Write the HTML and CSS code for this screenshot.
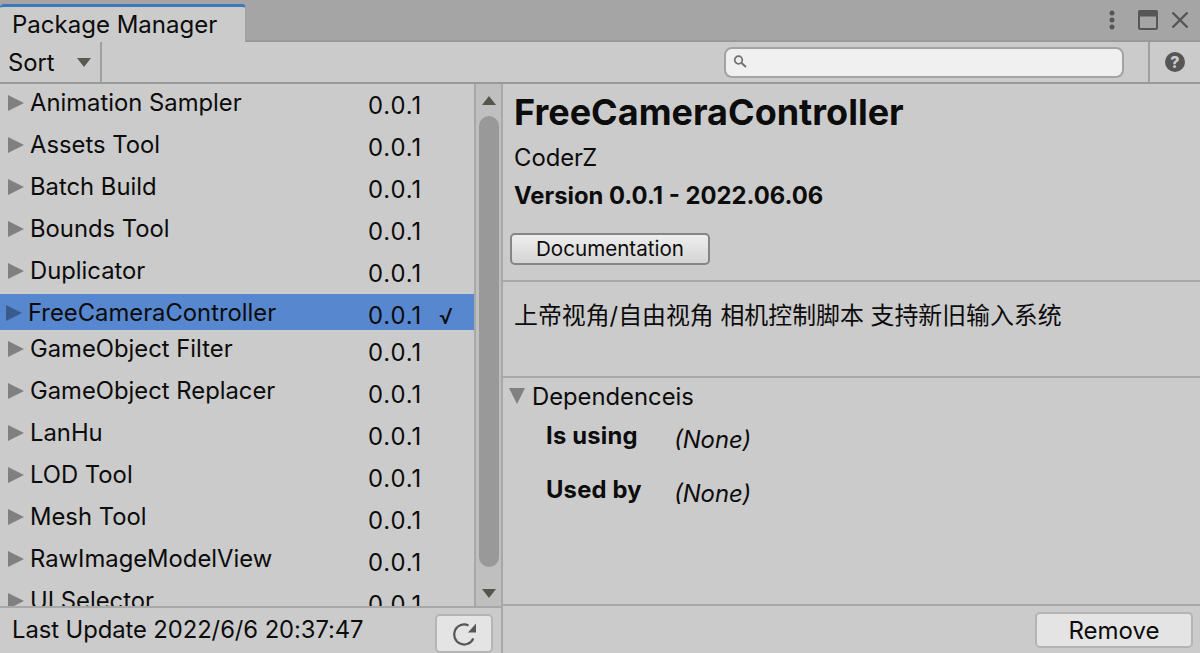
FILE: index.html
```html
<!DOCTYPE html>
<html lang="en">
<head>
<meta charset="utf-8">
<title>Package Manager</title>
<link rel="stylesheet" href="styles.css">
</head>
<body>
<div class="window">
  <header class="tabbar">
    <div class="tab">Package Manager</div>
    <div class="winbtns">
      <svg class="ico-dots" width="8" height="22" viewBox="0 0 8 22"><circle cx="4" cy="4" r="2.5"/><circle cx="4" cy="11" r="2.5"/><circle cx="4" cy="18" r="2.5"/></svg>
      <svg class="ico-max" width="20" height="20" viewBox="0 0 20 20"><rect x="1" y="1" width="18" height="18" rx="1.5" fill="none" stroke-width="2"/><rect x="1" y="1" width="18" height="5"/></svg>
      <svg class="ico-close" width="18" height="18" viewBox="0 0 18 18"><path d="M1.5 1.5l15 15M16.500 1.500l-15 15" fill="none" stroke-width="2.400"/></svg>
    </div>
  </header>
  <div class="toolbar">
    <div class="sort"><span>Sort</span><i class="tri tri-sort"></i></div>
    <div class="search">
      <svg width="16" height="16" viewBox="0 0 16 16"><circle cx="6.500" cy="6" r="3.800" fill="none" stroke-width="1.700"/><path d="M9.500 9l4.500 4" fill="none" stroke-width="2"/></svg>
    </div>
    <div class="help"><span class="help-badge">?</span></div>
  </div>
  <div class="main">
    <aside class="left">
      <div class="listwrap">
        <ul class="list">
          <li class="row"><i class="tri tri-right"></i><span class="name">Animation Sampler</span><span class="ver">0.0.1</span></li>
          <li class="row"><i class="tri tri-right"></i><span class="name">Assets Tool</span><span class="ver">0.0.1</span></li>
          <li class="row"><i class="tri tri-right"></i><span class="name">Batch Build</span><span class="ver">0.0.1</span></li>
          <li class="row"><i class="tri tri-right"></i><span class="name">Bounds Tool</span><span class="ver">0.0.1</span></li>
          <li class="row"><i class="tri tri-right"></i><span class="name">Duplicator</span><span class="ver">0.0.1</span></li>
          <li class="row selected"><i class="tri tri-right"></i><span class="name">FreeCameraController</span><span class="ver">0.0.1</span><span class="check">√</span></li>
          <li class="row"><i class="tri tri-right"></i><span class="name">GameObject Filter</span><span class="ver">0.0.1</span></li>
          <li class="row"><i class="tri tri-right"></i><span class="name">GameObject Replacer</span><span class="ver">0.0.1</span></li>
          <li class="row"><i class="tri tri-right"></i><span class="name">LanHu</span><span class="ver">0.0.1</span></li>
          <li class="row"><i class="tri tri-right"></i><span class="name">LOD Tool</span><span class="ver">0.0.1</span></li>
          <li class="row"><i class="tri tri-right"></i><span class="name">Mesh Tool</span><span class="ver">0.0.1</span></li>
          <li class="row"><i class="tri tri-right"></i><span class="name">RawImageModelView</span><span class="ver">0.0.1</span></li>
          <li class="row"><i class="tri tri-right"></i><span class="name">UI Selector</span><span class="ver">0.0.1</span></li>
        </ul>
        <div class="scrollbar">
          <i class="tri tri-up"></i>
          <div class="thumb"></div>
          <i class="tri tri-down"></i>
        </div>
      </div>
      <footer class="left-foot">
        <span class="updated">Last Update 2022/6/6 20:37:47</span>
        <button class="refresh" type="button" aria-label="Refresh">
          <svg width="26" height="26" viewBox="0 0 26 26"><path d="M22.300 17.500A10 10 0 1 1 17.500 4.500" fill="none" stroke-width="2.200"/><path d="M17 11.500L25 11.500L25 2.500Z" class="solid"/></svg>
        </button>
      </footer>
    </aside>
    <section class="right">
      <div class="detail">
        <div class="info">
          <h1>FreeCameraController</h1>
          <div class="author">CoderZ</div>
          <div class="version">Version 0.0.1 - 2022.06.06</div>
          <button class="doc" type="button">Documentation</button>
        </div>
        <div class="desc">上帝视角/自由视角 相机控制脚本 支持新旧输入系统</div>
        <div class="deps">
          <div class="deps-head"><i class="tri tri-open"></i><span>Dependenceis</span></div>
          <div class="dep"><b>Is using</b><em>(None)</em></div>
          <div class="dep"><b>Used by</b><em>(None)</em></div>
        </div>
      </div>
      <footer class="right-foot"><button class="remove" type="button">Remove</button></footer>
    </section>
  </div>
</div>
</body>
</html>
```
FILE: styles.css
```css
* { box-sizing: border-box; }
html, body { margin: 0; height: 100%; overflow: hidden; }
body { font-family: Inter, "Noto Sans CJK SC", sans-serif; font-size: 23.8px; color: #0c0c0c; background: #cbcbcb; }
ul { list-style: none; margin: 0; padding: 0; }
button { font-family: inherit; color: inherit; padding: 0; cursor: default; }
.window { width: 1200px; height: 653px; display: flex; flex-direction: column; }

.tabbar { height: 42px; flex: none; display: flex; justify-content: space-between; align-items: flex-end; background: #a5a5a5; border-bottom: 2px solid #999; }
.tab { width: 246px; height: 38px; margin-bottom: -2px; background: #cbcbcb; border-top: 3px solid #3d78b8; border-right: 1px solid #a0a0a0; border-radius: 4px 4px 0 0; padding-left: 12px; font-size: 24px; line-height: 35px; }
.winbtns { display: flex; align-items: center; gap: 13px; padding-right: 11px; height: 40px; }
.winbtns svg { fill: #565656; stroke: #565656; display: block; }
.ico-dots { stroke: none !important; }
.ico-max { margin-left: 9px; }

.toolbar { height: 42px; flex: none; display: flex; align-items: stretch; border-bottom: 2px solid #999; }
.sort { width: 102px; flex: none; display: flex; align-items: center; justify-content: space-between; padding: 0 9px 0 8px; border-right: 2px solid #a0a0a0; }
.tri { display: block; width: 0; height: 0; flex: none; border-style: solid; border-color: transparent; }
.tri-sort { border-width: 9px 7.500px 0; border-top-color: #595951; }
.search { margin: 5px 0 5px auto; width: 400px; height: 31px; background: #f0f0f0; border: 2px solid #a3a3a3; border-radius: 8px; padding: 5px 0 0 6px; }
.search svg { display: block; fill: none; stroke: #707070; }
.help { width: 52px; margin-left: 24px; flex: none; border-left: 2px solid #a0a0a0; display: flex; align-items: center; justify-content: center; }
.help-badge { width: 20px; height: 20px; border-radius: 50%; background: #565656; color: #cbcbcb; font-size: 16px; font-weight: 800; line-height: 20px; text-align: center; }

.main { flex: 1; min-height: 0; display: flex; }
.left { width: 501px; flex: none; display: flex; flex-direction: column; }
.listwrap { height: 522px; flex: none; display: flex; overflow: hidden; }
.list { width: 474px; flex: none; }
.row { height: 42px; display: flex; align-items: flex-start; overflow: visible; }
.row .tri-right { margin: 11px 0 0 8px; border-width: 8px 0 8px 16px; border-left-color: #808080; }
.row .name { margin-left: 6px; width: 338px; line-height: 38px; white-space: nowrap; flex: none; }
.row .ver { line-height: 44px; letter-spacing: 0.9px; }
.selected ~ .row .ver { line-height: 46px; }
.selected { height: 36px; background: #5787cf; overflow: hidden; }
.selected .tri-right { margin-left: 6px; border-left-color: #3a5c8c; }
.selected .name { margin-left: 6px; width: 340px; }
.check { margin-left: 17px; line-height: 44px; font-size: 22px; }
.scrollbar { width: 27px; flex: none; background: #bfbfbf; border-left: 2px solid #a8a8a8; display: flex; flex-direction: column; align-items: center; padding: 12px 0 8px; }
.scrollbar .tri-up { border-width: 0 7px 9px; border-bottom-color: #55554d; }
.scrollbar .thumb { width: 20px; flex: 1; margin: 11px 0 22px; background: #999; border-radius: 10px; }
.scrollbar .tri-down { border-width: 9px 7px 0; border-top-color: #55554d; }

.left-foot { flex: 1; display: flex; align-items: flex-start; justify-content: space-between; border-top: 2px solid #a8a8a8; padding: 0 8px 0 12px; line-height: 44px; }
.updated { letter-spacing: -0.07px; }
.refresh { width: 58px; height: 39px; margin-top: 6px; background: #e4e4e4; border: 2px solid #b4b4b4; border-radius: 5px; display: flex; align-items: center; justify-content: center; }
.refresh svg { display: block; fill: none; stroke: #565656; }
.refresh .solid { fill: #565656; stroke: none; }

.right { flex: 1; min-width: 0; display: flex; flex-direction: column; border-left: 2px solid #a8a8a8; }
.detail { height: 520px; flex: none; display: flex; flex-direction: column; }
.info { height: 198px; flex: none; padding: 0 0 0 11px; border-bottom: 2px solid #a8a8a8; }
h1 { margin: 6px 0 0; font-size: 36px; line-height: 44px; font-weight: 700; }
.author { line-height: 32px; margin-top: 8px; }
.version { font-weight: 700; line-height: 32px; margin-top: 6px; }
.doc { display: block; width: 200px; height: 32px; margin: 21px 0 0 -4px; padding-bottom: 2px; background: linear-gradient(#eeeeee, #d4d4d4); border: 2px solid #858585; border-radius: 5px; font-size: 20.6px; line-height: 25px; }
.desc { height: 96px; flex: none; padding: 17px 0 0 11px; line-height: 34px; font-size: 23.9px; border-bottom: 2px solid #a8a8a8; }
.deps { flex: 1; }
.deps-head { display: flex; align-items: center; height: 36px; padding-left: 6px; }
.deps-head span { margin-left: 7px; }
.tri-open { border-width: 16px 8.500px 0; border-top-color: #808080; }
.dep { display: flex; align-items: baseline; padding: 7px 0 0 43px; height: 54px; }
.dep b { width: 128px; flex: none; letter-spacing: 0.2px; }
.dep em { position: relative; top: 4px; }
.right-foot { flex: 1; display: flex; align-items: flex-start; justify-content: flex-end; border-top: 2px solid #a8a8a8; padding: 6px 7px 0 0; }
.remove { width: 158px; height: 36px; background: #e4e4e4; border: 2px solid #b4b4b4; border-radius: 5px; font-size: 24px; }
```
